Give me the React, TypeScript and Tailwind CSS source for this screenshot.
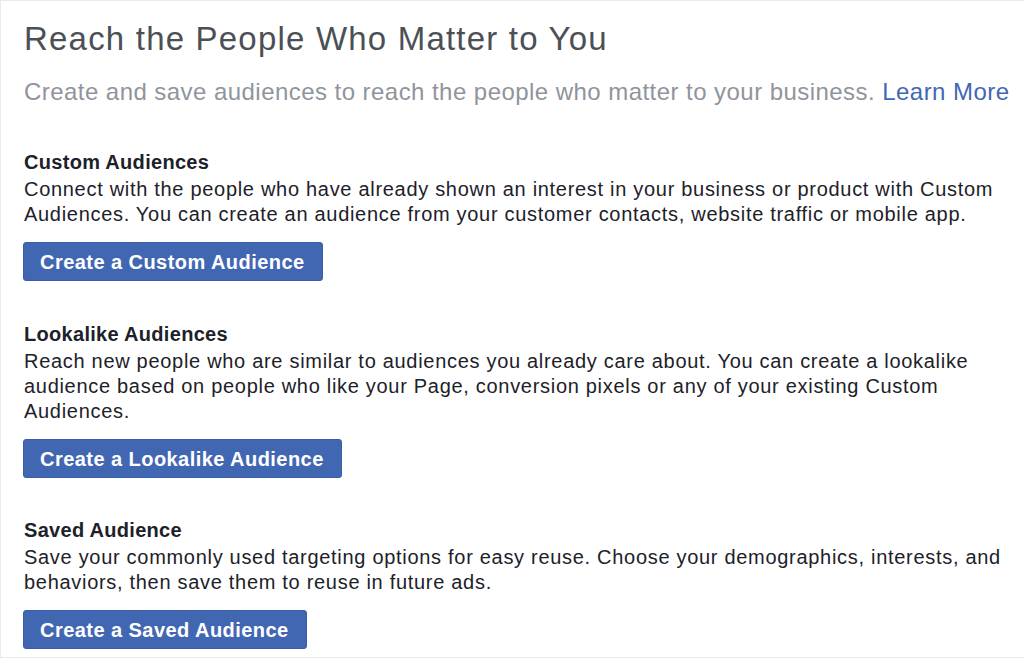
import React from "react";

const font = { fontFamily: '"Liberation Sans", Arial, Helvetica, sans-serif' };

function Section({
  title,
  lines,
  button,
  className,
}: {
  title: string;
  lines: string[];
  button: string;
  className?: string;
}) {
  return (
    <div className={className}>
      <h2 className="text-[20px] leading-[24px] font-bold text-[#1d2129] tracking-[0.3px]">{title}</h2>
      <p className="mt-[3px] text-[20px] leading-[25px] text-[#1d2129] tracking-[0.7px] whitespace-nowrap">
        {lines.map((l, i) => (
          <React.Fragment key={i}>
            {l}
            {i < lines.length - 1 && <br />}
          </React.Fragment>
        ))}
      </p>
      <button className="-ml-px mt-[15px] h-[39px] pl-[16px] pr-[17px] rounded-[3px] bg-[#4267b2] border border-[#3b5fa6] text-white text-[20px] font-bold leading-none tracking-[0.45px]">
        {button}
      </button>
    </div>
  );
}

export default function App() {
  return (
    <div
      style={font}
      className="w-[1024px] h-[658px] bg-white border-l border-t border-b border-[#e9eaed] overflow-hidden"
    >
      <div className="pl-[23px] pt-[18px]">
        <h1 className="text-[33px] leading-[40px] text-[#4b4f56] font-normal tracking-[1.2px] whitespace-nowrap">
          Reach the People Who Matter to You
        </h1>
        <p className="mt-[19px] text-[24px] leading-[28px] text-[#90949c] tracking-[0.45px] whitespace-nowrap">
          Create and save audiences to reach the people who matter to your business.{" "}
          <span className="text-[#4267b2]">Learn More</span>
        </p>
        <Section
          className="mt-[44px]"
          title="Custom Audiences"
          lines={[
            "Connect with the people who have already shown an interest in your business or product with Custom",
            "Audiences. You can create an audience from your customer contacts, website traffic or mobile app.",
          ]}
          button="Create a Custom Audience"
        />
        <Section
          className="mt-[41px]"
          title="Lookalike Audiences"
          lines={[
            "Reach new people who are similar to audiences you already care about. You can create a lookalike",
            "audience based on people who like your Page, conversion pixels or any of your existing Custom",
            "Audiences.",
          ]}
          button="Create a Lookalike Audience"
        />
        <Section
          className="mt-[40px]"
          title="Saved Audience"
          lines={[
            "Save your commonly used targeting options for easy reuse. Choose your demographics, interests, and",
            "behaviors, then save them to reuse in future ads.",
          ]}
          button="Create a Saved Audience"
        />
      </div>
    </div>
  );
}
